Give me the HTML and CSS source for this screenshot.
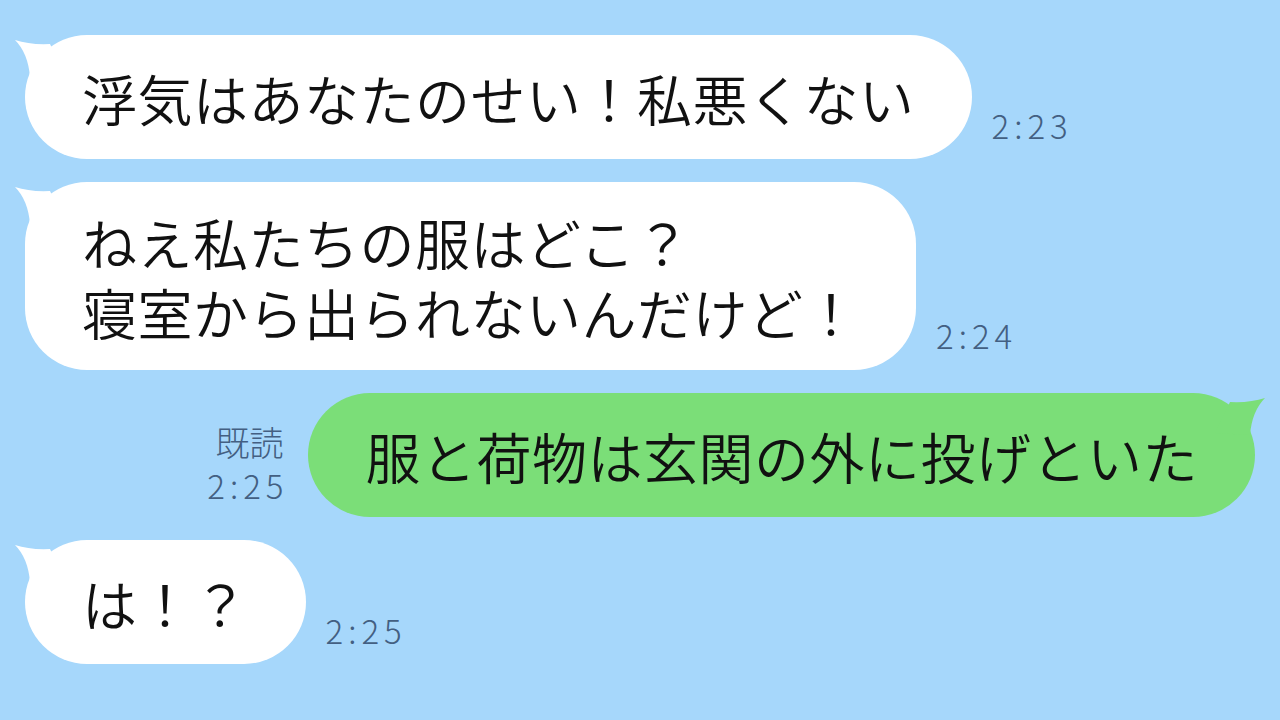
FILE: index.html
```html
<!DOCTYPE html>
<html lang="ja">
<head>
<meta charset="utf-8">
<title>chat</title>
<link rel="stylesheet" href="styles.css">
</head>
<body>
<div class="chat">
  <div class="row row-in">
    <div class="bubble bubble-in">
      <svg class="tail tail-in" viewBox="0 0 70 70" width="70" height="70"><path d="M4 5 Q19 10 39 9 L54 40 L19 42 Q17 18 4 5 Z"/></svg>
      <span class="msg">浮気はあなたのせい！私悪くない</span>
    </div>
    <div class="meta">2:23</div>
  </div>
  <div class="row row-in">
    <div class="bubble bubble-in bubble-two">
      <svg class="tail tail-in" viewBox="0 0 70 70" width="70" height="70"><path d="M4 5 Q19 10 39 9 L54 40 L19 42 Q17 18 4 5 Z"/></svg>
      <span class="msg">ねえ私たちの服はどこ？<br>寝室から出られないんだけど！</span>
    </div>
    <div class="meta meta-low">2:24</div>
  </div>
  <div class="row row-out">
    <div class="meta meta-out">
      <div class="read">既読</div>
      <div class="time">2:25</div>
    </div>
    <div class="bubble bubble-out">
      <svg class="tail tail-out" viewBox="0 0 70 70" width="70" height="70"><path d="M4 5 Q19 10 39 9 L54 40 L19 42 Q17 18 4 5 Z"/></svg>
      <span class="msg">服と荷物は玄関の外に投げといた</span>
    </div>
  </div>
  <div class="row row-in">
    <div class="bubble bubble-in">
      <svg class="tail tail-in" viewBox="0 0 70 70" width="70" height="70"><path d="M4 5 Q19 10 39 9 L54 40 L19 42 Q17 18 4 5 Z"/></svg>
      <span class="msg">は！？</span>
    </div>
    <div class="meta">2:25</div>
  </div>
</div>
</body>
</html>
```

FILE: styles.css
```css
html, body {
  margin: 0;
  padding: 0;
  background: #a6d7fb;
  width: 1280px;
  height: 720px;
  overflow: hidden;
}

.chat {
  box-sizing: border-box;
  width: 1280px;
  padding: 35px 25px 0 25px;
  display: flex;
  flex-direction: column;
  gap: 23px;
}

.row {
  display: flex;
  align-items: flex-end;
  gap: 20px;
}

.row-in {
  justify-content: flex-start;
}

.row-out {
  justify-content: flex-end;
}

.bubble {
  position: relative;
  padding: 27px 57px;
  border-radius: 62px;
  font-family: "Noto Sans CJK JP", "Noto Sans", sans-serif;
  font-weight: 350;
  font-size: 55px;
  letter-spacing: 0.5px;
  line-height: 70px;
  color: #111111;
  white-space: nowrap;
}

.bubble-two {
  padding-top: 24px;
  padding-bottom: 24px;
}

.bubble-in {
  background: #ffffff;
}

.bubble-out {
  background: #7bde78;
}

.msg {
  position: relative;
}

.tail {
  position: absolute;
  top: 0;
}

.tail-in {
  left: -14px;
  fill: #ffffff;
}

.tail-out {
  right: -14px;
  fill: #7bde78;
  transform: scaleX(-1);
}

.meta {
  font-family: "Noto Sans CJK JP", "Noto Sans", sans-serif;
  font-weight: 300;
  font-size: 33px;
  letter-spacing: 5px;
  line-height: 38px;
  color: #435f82;
  margin-bottom: 15px;
}

.meta-low {
  margin-bottom: 16px;
}

.meta-out {
  display: flex;
  flex-direction: column;
  align-items: flex-end;
  gap: 5px;
  margin-bottom: 13px;
  margin-right: 0;
}

.read {
  font-size: 34px;
  letter-spacing: 0;
  margin-right: 5px;
}
```
